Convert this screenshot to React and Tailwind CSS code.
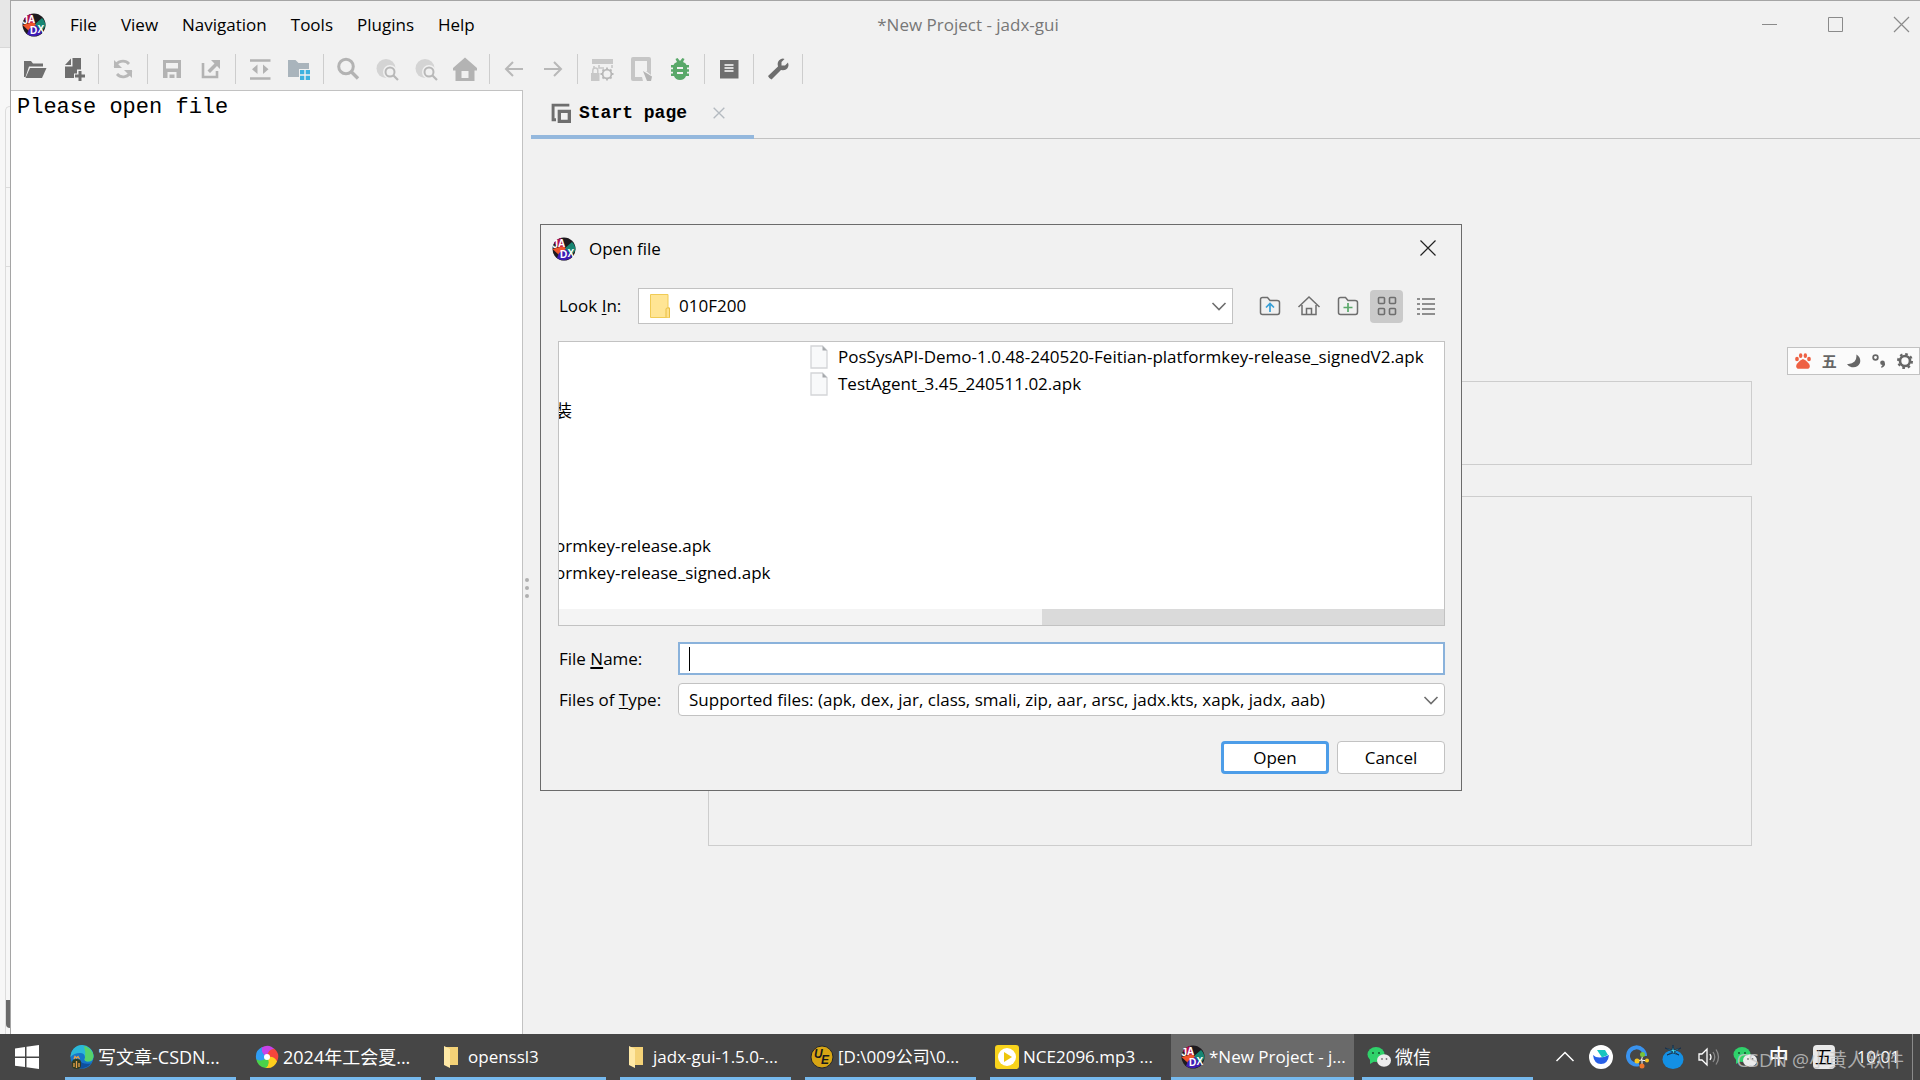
import { useState } from "react";

const menus = ["File", "View", "Navigation", "Tools", "Plugins", "Help"];

function Svg({ size = 24, label, children, ...props }) {
  return (
    <svg width={size} height={size} viewBox="0 0 24 24" fill="none" aria-label={label} className="shrink-0" {...props}>
      {children}
    </svg>
  );
}

function JadxLogo({ size = 24 }) {
  return (
    <Svg size={size}>
      <circle cx="12" cy="12" r="11.5" fill="#1d1a1e" />
      <path d="M2 6 A11.5 11.5 0 0 1 9 1 L13 10 L8 12 Z" fill="#b0124f" />
      <path d="M12 12 L20 5 A11.5 11.5 0 0 1 23.5 13 L20 18 Z" fill="#178672" />
      <path d="M0.5 12 L12 9 L14 12 L7 18 Z" fill="#f0562b" />
      <path d="M7 16 L14 12 L20 20 A11.5 11.5 0 0 1 5 21 Z" fill="#3d1cb5" />
      <g fill="#fff" fontFamily="Liberation Sans" fontWeight="bold" fontSize="10">
        <text x="0.5" y="10.5">J</text>
        <text x="6" y="10">A</text>
        <text x="8" y="21">D</text>
        <text x="15.5" y="20">X</text>
      </g>
    </Svg>
  );
}

function SearchBubble() {
  return (
    <Svg>
      <circle cx="11" cy="11.5" r="9.5" fill="#d4d4d4" />
      <circle cx="15" cy="15" r="7" fill="#f1f1f1" />
      <circle cx="15" cy="15" r="4.5" stroke="#b8b8b8" strokeWidth="2" />
      <path d="M18.5 18.5 L23 23" stroke="#b8b8b8" strokeWidth="2.2" />
    </Svg>
  );
}

// null marks a separator
const toolbar = [
  ["Open file", <Svg><path d="M1 20 V4 H8 L10 6.5 H20 V9.5 H6 L2.5 20 Z" fill="#6e6e6e" /><path d="M7 11 H23.5 L19 21 H2.5 Z" fill="#6e6e6e" /></Svg>],
  ["Add files", <Svg><path d="M9 1.5 V8 H3 Z M10.5 1 H19 V12.5 H15 V16.5 H12 V21 H3 V9.5 H10.5 Z" fill="#6e6e6e" /><path d="M18 14 V24 M13 19 H23" stroke="#6e6e6e" strokeWidth="3" /></Svg>],
  null,
  ["Reload", <Svg><path d="M4 10 A8.2 8.2 0 0 1 18 7 M20 14 A8.2 8.2 0 0 1 6 17" stroke="#b8b8b8" strokeWidth="2.8" /><path d="M3 3 V11 H11 Z M21 21 V13 H13 Z" fill="#b8b8b8" /></Svg>],
  null,
  ["Save", <Svg><path fillRule="evenodd" d="M3 3 H21 V21 H3 Z M6 6 V11.5 H18 V6 Z M7.5 15 V21 H9.5 V17.5 H14.5 V21 H16.5 V15 Z" fill="#b3b3b3" /></Svg>],
  ["Export", <Svg><path d="M4 6 V20 H18 V14" stroke="#b3b3b3" strokeWidth="2.6" /><path d="M12 3 H21 V12 L18 9 L11 16 L8.5 13.5 L15.5 6.5 Z" fill="#b3b3b3" /></Svg>],
  null,
  ["Sync tree", <Svg><path d="M2 3.5 H22.5 M2 21.5 H22.5" stroke="#b3b3b3" strokeWidth="2.6" /><path d="M9.5 7.5 V17 L4 12.2 Z M15 7.5 V17 L20.5 12.2 Z" fill="#b3b3b3" /></Svg>],
  ["Flat packages", <Svg><path d="M1 3 H8.5 L11.5 6 H22 V12 H12 V20 H1 Z" fill="#a9b4bc" /><path d="M13 13 H17.3 V17.3 H13 Z M18.7 13 H23 V17.3 H18.7 Z M13 18.7 H17.3 V23 H13 Z M18.7 18.7 H23 V23 H18.7 Z" fill="#3eb2df" /></Svg>],
  null,
  ["Text search", <Svg><circle cx="10" cy="9.5" r="7.3" stroke="#b3b3b3" strokeWidth="3" /><path d="M15.5 15 L22 21.5" stroke="#b3b3b3" strokeWidth="3.4" /></Svg>],
  ["Class search", <SearchBubble />],
  ["Comment search", <SearchBubble />],
  ["Main activity", <Svg><path fillRule="evenodd" d="M12 0.5 L24 11 V13.5 H21.5 V24 H2.5 V13.5 H0 V11 Z M8.5 14 V21 H15.5 V14 Z" fill="#b3b3b3" /></Svg>],
  null,
  ["Back", <Svg><path d="M21 12 H4 M11 5 L4 12 L11 19" stroke="#b8b8b8" strokeWidth="2" /></Svg>],
  ["Forward", <Svg><path d="M3 12 H20 M13 5 L20 12 L13 19" stroke="#b8b8b8" strokeWidth="2" /></Svg>],
  null,
  ["Deobfuscation", <Svg><path d="M2 2 H23 V7 H2 Z" fill="#c8c8c8" /><path d="M4 9 V12 M9 8 V11 H14 M22 8 V11" stroke="#c8c8c8" strokeWidth="1.6" /><path d="M1 16 H9.5 V24 H1 Z" fill="#c8c8c8" /><path d="M2.8 16 V13.5 A2.5 2.5 0 0 1 7.8 13.5 V16" stroke="#c8c8c8" strokeWidth="1.5" /><circle cx="17" cy="17" r="4.4" stroke="#b8b8b8" strokeWidth="1.8" /><path d="M17 10.5 V13 M17 21 V23.5 M10.5 17 H13 M21 17 H23.5 M12.5 12.5 L14 14 M20 20 L21.5 21.5 M21.5 12.5 L20 14 M12.5 21.5 L14 20" stroke="#b8b8b8" strokeWidth="1.8" /></Svg>],
  ["Quark engine", <Svg><path fillRule="evenodd" d="M2 2 Q2 0 4 0 H20 Q22 0 22 2 V18 L17 14 H18 V4 H6 V20 H13 L14 24 H4 Q2 24 2 22 Z" fill="#c6c6c6" /><path d="M14 14 L23 19.5 L22 24 H18 Z" fill="#b4b4b4" /></Svg>],
  ["Debugger", <Svg><path fillRule="evenodd" d="M7.5 2 L9.5 1 L12 4 L14.5 1 L16.5 2 L15 5 Q18 6 18.5 8 H21 V10.5 H19 V12.2 H21 V14.7 H19 V16.5 H21 V19 H18 Q16.5 23 12 23 Q7.5 23 6 19 H3 V16.5 H5 V14.7 H3 V12.2 H5 V10.5 H3 V8 H5.5 Q6 6 9 5 Z M9 10 V12 H15 V10 Z M9 15 V17 H15 V15 Z" fill="#59a869" /></Svg>],
  null,
  ["Log viewer", <Svg><path d="M3 3 H21.5 V21.5 H3 Z" fill="#6e6e6e" /><path d="M7.5 8 H16.5 M7.5 11 H16.5 M7.5 14 H16.5" stroke="#fff" strokeWidth="1.3" /></Svg>],
  null,
  ["Preferences", <Svg><path d="M2 19 L12 9.5 Q10.5 4 15 2 Q17 1 18.5 2 L15.5 5 V8.5 H19 L22 5.5 Q23.5 10 20 12.5 Q18 13.5 15 13 L5.5 22.5 Q3 21.5 2 19 Z" fill="#6e6e6e" /></Svg>],
  null,
];

function Toolbar() {
  return (
    <div className="flex h-[42px] items-center pb-0.5 pl-1">
      {toolbar.map((item, i) =>
        item ? (
          <button key={i} type="button" aria-label={item[0]} className="flex h-8 w-[39px] items-center justify-center">
            {item[1]}
          </button>
        ) : (
          <span key={i} className="mr-1 ml-[5px] h-[30px] w-px bg-[#cdcdcd]" />
        )
      )}
    </div>
  );
}

function TitleBar() {
  return (
    <header className="flex h-12 items-center pl-[11px]">
      <div className="flex flex-1 items-center">
        <JadxLogo />
        <nav className="ml-3 flex">
          {menus.map((m) => (
            <button key={m} type="button" className="px-3 text-[17px] leading-6">{m}</button>
          ))}
        </nav>
      </div>
      <h1 className="text-[17px] leading-6 text-[#777]">*New Project - jadx-gui</h1>
      <div className="flex flex-1 justify-end gap-[42px] pr-1.5">
        <button type="button" aria-label="Minimize"><Svg><path d="M4 11.5 H19" stroke="#8a8a8a" /></Svg></button>
        <button type="button" aria-label="Maximize"><Svg><path d="M4.5 4.5 H18.5 V18.5 H4.5 Z" stroke="#8a8a8a" /></Svg></button>
        <button type="button" aria-label="Close"><Svg><path d="M4 4 L19 19 M19 4 L4 19" stroke="#8a8a8a" strokeWidth="1.2" /></Svg></button>
      </div>
    </header>
  );
}

function Chevron() {
  return (
    <svg width="16" height="10" viewBox="0 0 16 10" fill="none" className="pointer-events-none absolute top-1/2 right-1.5 -mt-1">
      <path d="M1.5 1 L8 7.5 L14.5 1" stroke="#6e6e6e" strokeWidth="1.6" />
    </svg>
  );
}

function FileIcon() {
  return (
    <svg width="18" height="24" viewBox="0 0 18 24" fill="none" className="shrink-0">
      <path d="M1 1 H12.5 L17 5.5 V23 H1 Z" fill="#f8f9fa" stroke="#d3d5d8" strokeWidth="1.3" />
      <path d="M12.5 1 V5.5 H17 Z" fill="#a5a8ab" />
    </svg>
  );
}

const firstColumn = ["", "", "装", "", "", "", "", "ormkey-release.apk", "ormkey-release_signed.apk"];
const secondColumn = [
  "PosSysAPI-Demo-1.0.48-240520-Feitian-platformkey-release_signedV2.apk",
  "TestAgent_3.45_240511.02.apk",
];

const folder = "M2.5 5.5 Q2.5 3.5 4.5 3.5 H9.5 L12 6.5 H19 Q21.5 6.5 21.5 8.5 V18 Q21.5 20.5 19.5 20.5 H4.5 Q2.5 20.5 2.5 18.5 Z";

const views = [
  ["Up one level", <Svg><path d={folder} stroke="#6e6e6e" strokeWidth="1.5" /><path d="M12 18 V9.5 M8 13.5 L12 9.5 L16 13.5" stroke="#389fd6" strokeWidth="1.7" /></Svg>],
  ["Home", <Svg><path d="M1.5 13 L12 3 L22.5 13 M5 11 V20.5 H19 V11 M9.5 20.5 V14.5 H14.5 V20.5" stroke="#6e6e6e" strokeWidth="1.5" /></Svg>],
  ["New folder", <Svg><path d={folder} stroke="#6e6e6e" strokeWidth="1.5" /><path d="M12 9 V18 M7.5 13.5 H16.5" stroke="#59a869" strokeWidth="1.7" /></Svg>],
  ["List", <Svg><g stroke="#6e6e6e" strokeWidth="1.6"><rect x="3.5" y="3.5" width="6" height="6" rx="1" /><rect x="14.5" y="3.5" width="6" height="6" rx="1" /><rect x="3.5" y="14.5" width="6" height="6" rx="1" /><rect x="14.5" y="14.5" width="6" height="6" rx="1" /></g></Svg>],
  ["Details", <Svg><path d="M3 5 H6 M8 5 H21 M3 10 H6 M8 10 H21 M3 15 H6 M8 15 H21 M3 20 H6 M8 20 H21" stroke="#6e6e6e" strokeWidth="1.5" /></Svg>],
];

function OpenDialog() {
  const [name, setName] = useState("");
  const [view, setView] = useState("List");

  return (
    <section role="dialog" aria-label="Open file" className="absolute top-[224px] left-[540px] w-[922px] border border-[#6b6b6b] bg-[#f1f1f1] text-[17px] leading-6">
      <div className="flex h-12 items-center pr-[21px] pl-[11px]">
        <JadxLogo />
        <h2 className="ml-[13px] flex-1">Open file</h2>
        <button type="button" aria-label="Close">
          <Svg><path d="M4.5 3.5 L19.5 18.5 M19.5 3.5 L4.5 18.5" stroke="#222" strokeWidth="1.2" /></Svg>
        </button>
      </div>

      <div className="pt-[15px] pr-4 pb-4 pl-[18px]">
        <div className="flex items-center">
          <label htmlFor="look-in" className="w-[79px]">Look <u className="underline-offset-2">I</u>n:</label>
          <div className="relative flex-1">
            <svg width="20" height="24" viewBox="0 0 20 24" className="pointer-events-none absolute top-1.5 left-3">
              <path d="M0.5 0.5 H18 V14 H19.5 V23.5 H0.5 Z" fill="#ffe594" stroke="#f0cb55" />
              <path d="M16 23 V15 Q16 14 17.5 14 H19.5 V23.5" fill="#ffe08a" stroke="#e8bf45" />
            </svg>
            <select id="look-in" className="block h-9 w-full appearance-none border border-[#c2c2c2] bg-white pl-10">
              <option>010F200</option>
            </select>
            <Chevron />
          </div>
          <div className="ml-5 flex gap-1.5 pr-[3px]">
            {views.map(([label, icon]) => (
              <button
                key={label}
                type="button"
                aria-label={label}
                onClick={() => (label === "List" || label === "Details") && setView(label)}
                className={
                  view === label
                    ? "flex size-[33px] items-center justify-center rounded bg-[#cacaca]"
                    : "flex size-[33px] items-center justify-center rounded"
                }
              >
                {icon}
              </button>
            ))}
          </div>
        </div>

        <div className="-ml-px mt-[17px] flex h-[285px] flex-col border border-[#c2c2c2] bg-white">
          <div className="flex flex-1 overflow-hidden pt-px whitespace-nowrap">
            <ul className="w-[251px] shrink-0">
              {firstColumn.map((f, i) => (
                <li key={i} className="-ml-1 h-[27px] leading-[27px]">{f}</li>
              ))}
            </ul>
            <ul>
              {secondColumn.map((f) => (
                <li key={f} className="flex h-[27px] items-center gap-2.5"><FileIcon />{f}</li>
              ))}
            </ul>
          </div>
          <div className="flex h-4 bg-[#f4f4f4]">
            <div className="ml-auto w-[402px] bg-[#dadada]" />
          </div>
        </div>

        <div className="mt-4 flex items-center">
          <label htmlFor="file-name" className="w-[119px]">File <u className="decoration-2 underline-offset-2">N</u>ame:</label>
          <div className="relative flex-1">
            <input
              id="file-name"
              type="text"
              value={name}
              onChange={(e) => setName(e.target.value)}
              className="block h-[33px] w-full border-2 border-[#8ab2db] bg-white px-2 outline-none"
            />
            {!name && <span className="pointer-events-none absolute top-[5px] left-[11px] h-6 w-px bg-black" />}
          </div>
        </div>
        <div className="mt-2 flex items-center">
          <label htmlFor="file-type" className="w-[119px]">Files of <u className="underline-offset-2">T</u>ype:</label>
          <div className="relative flex-1">
            <select id="file-type" className="block h-[33px] w-full appearance-none rounded border border-[#c2c2c2] bg-white px-2.5">
              <option>Supported files: (apk, dex, jar, class, smali, zip, aar, arsc, jadx.kts, xapk, jadx, aab)</option>
            </select>
            <Chevron />
          </div>
        </div>
        <div className="mt-[25px] flex justify-end gap-2">
          <button type="button" className="h-[33px] w-[108px] rounded border-3 border-[#4d9de8] bg-white">Open</button>
          <button type="button" className="h-[33px] w-[108px] rounded border border-[#c2c2c2] bg-white">Cancel</button>
        </div>
      </div>
    </section>
  );
}

function FolderIcon() {
  return (
    <Svg>
      <path d="M5 2 H18 V20 H5 Z" fill="#f4d277" />
      <path d="M4 1 L10 4 V23 L4 20 Z" fill="#ffe9a6" />
    </Svg>
  );
}

function WechatIcon() {
  return (
    <Svg>
      <ellipse cx="9" cy="9.5" rx="8.5" ry="7.5" fill="#2fd16a" />
      <path d="M3 14 L3 19 L8 16 Z" fill="#2fd16a" />
      <ellipse cx="17" cy="15.5" rx="7" ry="6.2" fill="#ececec" />
      <circle cx="6" cy="8" r="1" fill="#14522c" />
      <circle cx="12" cy="8" r="1" fill="#14522c" />
      <circle cx="15" cy="14" r="0.9" fill="#777" />
      <circle cx="19.5" cy="14" r="0.9" fill="#777" />
    </Svg>
  );
}

function EdgeIcon() {
  return (
    <Svg>
      <circle cx="12" cy="12" r="11.5" fill="#1576c9" />
      <path d="M0.5 12 A11.5 11.5 0 0 1 23.5 11 Q23.5 17 17 16.5 Q13.5 16 15 13 Q15 8 10 8 Q4 8 0.5 12 Z" fill="#2bb8d8" />
      <path d="M14 1 A11.5 11.5 0 0 1 23.5 11 Q23.5 17 17 16.5 Q13.5 16 15 13 Q16 7 14 1 Z" fill="#56d36b" />
      <path d="M10 15 Q12 20 21 18.5 Q16 24 10 23 Z" fill="#0f4f9d" />
      <rect x="2" y="14" width="9" height="10" rx="4" fill="#2d3b22" />
      <path d="M4 14 L5 11.5 L6.5 13 L8 11.5 L9.5 14 M4 18 V22 M6.5 16 V23 M9 18 V22" stroke="#e7a04a" strokeWidth="1.3" />
    </Svg>
  );
}

function SwirlIcon() {
  const colors = ["#c643e8", "#f5453c", "#ffcf1d", "#4ad34a", "#2f9df4"];
  return (
    <Svg>
      {colors.map((c, i) => (
        <path key={c} d="M12 12 Q5 9 6.5 2.5 Q14 -2 20 4.5 Q14 4 12 12 Z" fill={c} transform={`rotate(${i * 72} 12 12)`} />
      ))}
      <circle cx="12" cy="12" r="3" fill="#fff" />
    </Svg>
  );
}

function UltraEditIcon() {
  return (
    <Svg>
      <circle cx="12" cy="12" r="11" fill="#d7a514" stroke="#20242e" />
      <g fill="#16181f" fontFamily="Liberation Sans" fontWeight="bold" fontStyle="italic" fontSize="12">
        <text x="4" y="13">U</text>
        <text x="11" y="19">E</text>
      </g>
    </Svg>
  );
}

function PlayIcon() {
  return (
    <Svg>
      <rect width="24" height="24" rx="3" fill="#f8d31c" />
      <circle cx="12" cy="12" r="9" fill="#fff" />
      <path d="M9 7 L17 12 L9 17 Z" fill="#eec60c" />
    </Svg>
  );
}

const tasks = [
  ["写文章-CSDN...", <EdgeIcon />, "text-lg"],
  ["2024年工会夏...", <SwirlIcon />, "text-lg"],
  ["openssl3", <FolderIcon />, ""],
  ["jadx-gui-1.5.0-...", <FolderIcon />, ""],
  ["[D:\\009公司\\0...", <UltraEditIcon />, ""],
  ["NCE2096.mp3 ...", <PlayIcon />, ""],
  ["*New Project - j...", <JadxLogo />, ""],
  ["微信", <WechatIcon />, "text-lg"],
];

function Taskbar() {
  return (
    <footer className="relative z-10 flex h-[46px] bg-[#464646] text-[17px] text-white">
      <button type="button" aria-label="Start" className="w-[55px] pl-[15px]">
        <Svg><path d="M0 3.5 L10 2 V11.5 H0 Z M11.5 1.8 L24 0 V11.5 H11.5 Z M0 13 H10 V22 L0 20.8 Z M11.5 13 H24 V24 L11.5 22.3 Z" fill="#fff" /></Svg>
      </button>
      <div className="flex gap-3.5 pl-2.5">
        {tasks.map(([label, icon, size], i) => (
          <button
            key={label}
            type="button"
            className={
              i === 6
                ? "-mr-1.5 -ml-1 flex w-[183px] items-center gap-1 border-b-3 border-[#76b9ed] bg-[#6a6a6a] pt-0.5 pl-2.5 whitespace-nowrap"
                : "flex w-[171px] items-center gap-1 border-b-3 border-[#76b9ed] pt-0.5 pl-[5px] whitespace-nowrap"
            }
          >
            {icon}
            <span className={size}>{label}</span>
          </button>
        ))}
      </div>
      <div className="ml-auto flex items-center gap-3 pr-[7px]">
        <Svg label="Show hidden icons"><path d="M3.5 16 L12 7.5 L20.5 16" stroke="#fff" strokeWidth="1.5" /></Svg>
        <Svg><circle cx="12" cy="12" r="12" fill="#fff" /><path d="M4 10 Q9 15 20 10 Q19 19 12 19 Q5 19 4 10 Z" fill="#2860e8" /><path d="M8 5 H16 L19 10 L13 12.5 Z" fill="#18c6c0" /></Svg>
        <Svg><path d="M14 19 A8.5 8.5 0 1 1 20 11" stroke="#3a93ee" strokeWidth="4" /><path d="M18 9 L16.5 15 L11 16 M16.5 15 L22 16 M17 15 V21" stroke="#fff" /><circle cx="17.5" cy="9.5" r="2.5" fill="#77c43a" /><circle cx="12" cy="16" r="2.5" fill="#f7c51e" /><circle cx="17" cy="21" r="2.5" fill="#f0752a" /><circle cx="22" cy="15.5" r="2" fill="#f7c51e" /></Svg>
        <Svg><ellipse cx="12" cy="14.500" rx="10.5" ry="9.5" fill="#1490e4" /><path d="M12 7 L4 3 L11 5 L12 0 L13 5 L20 3 L13 7 L18 10 L12 8 L6 10 Z" fill="#3fd4e8" stroke="#152b48" strokeWidth="0.8" /></Svg>
        <Svg><path d="M2 9 H5 L10 4 V20 L5 15 H2 Z" stroke="#fff" strokeWidth="1.3" /><path d="M13 9 Q15 12 13 15" stroke="#fff" strokeWidth="1.3" /><path d="M16 7 Q19.5 12 16 17 M19 4.5 Q24 12 19 19.5" stroke="#8b8b8b" strokeWidth="1.3" /></Svg>
        <WechatIcon />
        <span className="w-8 text-xl leading-6 font-medium">中</span>
        <span className="mr-2.5 w-[22px] rounded bg-[#e9e9e9] text-center text-lg leading-6 text-black">五</span>
        <time>10:01</time>
        <span className="h-[46px] w-px bg-[#8a8a8a]" />
      </div>
      <span className="absolute top-3.5 right-4 text-[19px] leading-6 whitespace-nowrap text-[#c8c8c8]/80">CSDN @小黄人软件</span>
    </footer>
  );
}

function ImeBar() {
  return (
    <div className="absolute top-[347px] right-0 flex h-7 w-[133px] items-center justify-between border border-[#c2c2c2] bg-[#fbfbfb] pr-1.5 pl-[7px]">
      <Svg size={16}><g fill="#ee6143"><ellipse cx="3" cy="9" rx="2.8" ry="3.5" /><ellipse cx="8.5" cy="4" rx="2.6" ry="3.6" /><ellipse cx="15.5" cy="4" rx="2.6" ry="3.6" /><ellipse cx="21" cy="9" rx="2.8" ry="3.5" /><path d="M12 9 Q16 10 21 16 Q24 21 20 23.5 H4 Q0 21 3 16 Q8 10 12 9 Z" /></g></Svg>
      <span className="text-[15px] leading-4 font-bold text-[#666]">五</span>
      <Svg size={14}><path d="M16 1 Q25 7 22 16 Q18 24 8 22.5 Q2 21 0 17 Q8 18 13 13 Q17 8 16 1 Z" fill="#666" /></Svg>
      <Svg size={14}><circle cx="6" cy="6" r="4" stroke="#666" strokeWidth="3" /><path d="M22 15 Q24 21 16 24 V21 Q18 20 18 19 A4 4 0 1 1 22 15 Z" fill="#666" /></Svg>
      <Svg size={16}><circle cx="12" cy="12" r="7.5" stroke="#666" strokeWidth="4" /><circle cx="12" cy="12" r="10.5" stroke="#666" strokeWidth="3" strokeDasharray="4 4.25" /></Svg>
    </div>
  );
}

export default function App() {
  return (
    <div className="relative flex min-h-screen flex-col overflow-hidden bg-[#f1f1f1] font-['Open_Sans','Noto_Sans_CJK_SC',sans-serif] text-black">
      <div className="flex flex-1">
        {/* sliver of the browser window behind */}
        <div className="flex w-2.5 flex-col bg-[#f7f7f7]">
          <div className="h-12 border-b border-[#d8d8d8] bg-[#e7e7e7]" />
          <div className="mt-[58px] ml-[5px] flex flex-1 flex-col rounded-tl-lg border-t border-l border-[#dcdcdc]">
            <div className="mt-20 h-20 border-y border-[#dcdcdc]" />
            <div className="mt-auto mb-1.5 h-7 rounded-bl-lg bg-[#6a6a6a]" />
          </div>
        </div>

        <main className="flex flex-1 flex-col border-t border-l border-[#a5a5a5]">
          <TitleBar />
          <Toolbar />
          <div className="-mt-px flex flex-1">
            <aside className="w-[512px] border-t border-r border-[#c2c2c2] bg-white pt-[5px] pl-1.5">
              <p className="font-['Liberation_Mono',monospace] text-[22px] leading-6">Please open file</p>
            </aside>
            <div className="flex w-2 flex-col items-center justify-center gap-1 pt-[52px]">
              <span className="size-1 rounded-full bg-[#b0b0b0]" />
              <span className="size-1 rounded-full bg-[#b0b0b0]" />
              <span className="size-1 rounded-full bg-[#b0b0b0]" />
            </div>
            <div className="flex flex-1 flex-col">
              <div className="flex h-[49px] border-b border-[#c2c2c2]">
                <div className="-mb-px flex w-[223px] items-center border-b-4 border-[#94b8dd] pl-5">
                  <Svg size={20}><path d="M22 2.5 H2.5 V20 H6" stroke="#6e6e6e" strokeWidth="3.5" /><path d="M10 10 H22 V22 H10 Z" stroke="#6e6e6e" strokeWidth="4" /></Svg>
                  <span className="ml-2 font-['Liberation_Mono',monospace] text-[18px] leading-6 font-bold">Start page</span>
                  <button type="button" aria-label="Close tab" className="ml-6">
                    <Svg size={16}><path d="M4 4 L20 20 M20 4 L4 20" stroke="#b4bac0" strokeWidth="2" /></Svg>
                  </button>
                </div>
              </div>
              <div className="flex flex-1 flex-col gap-[31px] pt-[242px] pr-[168px] pl-[177px]">
                <div className="h-[84px] border border-[#cdcdcd]" />
                <div className="h-[350px] border border-[#cdcdcd]" />
              </div>
            </div>
          </div>
        </main>
      </div>
      <OpenDialog />
      <ImeBar />
      <Taskbar />
    </div>
  );
}
